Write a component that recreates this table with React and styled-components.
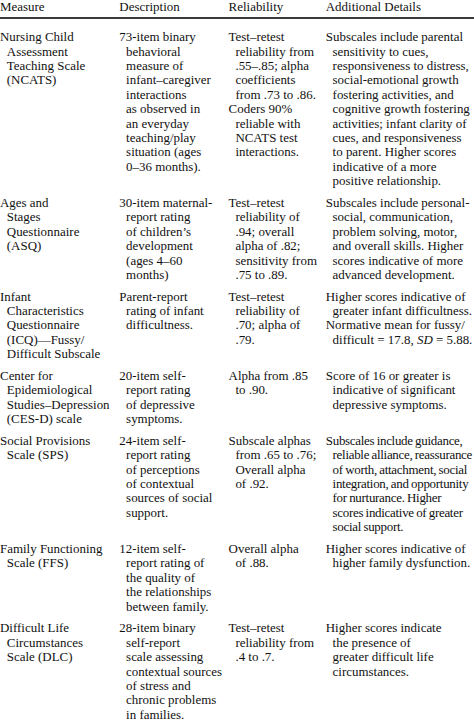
import React from "react";
import styled, { createGlobalStyle } from "styled-components";

const Global = createGlobalStyle`
  html, body { margin: 0; padding: 0; background: #fff; }
  body { overflow: hidden; }
`;

const COLS = "119.3px 109.3px 97.2px 1fr";

const Page = styled.div`
  width: 474px;
  height: 722px;
  overflow: hidden;
  background: #fff;
  color: #111;
  font-family: "Liberation Serif", "Times New Roman", serif;
  font-size: 12.95px;
  line-height: 14.4px;
`;

const HeaderRow = styled.div`
  display: grid;
  grid-template-columns: ${COLS};
  padding-bottom: 3px;
  border-bottom: 2px solid #3a3a3a;
  margin-top: -0.4px;
`;

const HeaderCell = styled.div`
  white-space: nowrap;
`;

const Body = styled.div`
  display: flex;
  flex-direction: column;
  gap: 7.3px;
  padding-top: 11.1px;
`;

const Row = styled.div`
  display: grid;
  grid-template-columns: ${COLS};
`;

const Cell = styled.div`
  display: flex;
  flex-direction: column;
  letter-spacing: ${(p) => (p.$tight ? "-0.28px" : "normal")};
  word-spacing: ${(p) => (p.$tight ? "-0.6px" : "normal")};
`;

const Para = styled.p`
  margin: 0;
  padding-left: 6.8px;
  text-indent: -6.8px;
  white-space: nowrap;
`;

const Em = styled.i`
  font-style: italic;
`;

const headers = ["Measure", "Description", "Reliability", "Additional Details"];

const rows = [
  [
    [["Nursing Child", "Assessment", "Teaching Scale", "(NCATS)"]],
    [["73-item binary", "behavioral", "measure of", "infant–caregiver", "interactions", "as observed in", "an everyday", "teaching/play", "situation (ages", "0–36 months)."]],
    [
      ["Test–retest", "reliability from", ".55–.85; alpha", "coefficients", "from .73 to .86."],
      ["Coders 90%", "reliable with", "NCATS test", "interactions."],
    ],
    [["Subscales include parental", "sensitivity to cues,", "responsiveness to distress,", "social-emotional growth", "fostering activities, and", "cognitive growth fostering", "activities; infant clarity of", "cues, and responsiveness", "to parent. Higher scores", "indicative of a more", "positive relationship."]],
  ],
  [
    [["Ages and", "Stages", "Questionnaire", "(ASQ)"]],
    [["30-item maternal-", "report rating", "of children’s", "development", "(ages 4–60", "months)"]],
    [["Test–retest", "reliability of", ".94; overall", "alpha of .82;", "sensitivity from", ".75 to .89."]],
    [["Subscales include personal-", "social, communication,", "problem solving, motor,", "and overall skills. Higher", "scores indicative of more", "advanced development."]],
  ],
  [
    [["Infant", "Characteristics", "Questionnaire", "(ICQ)—Fussy/", "Difficult Subscale"]],
    [["Parent-report", "rating of infant", "difficultness."]],
    [["Test–retest", "reliability of", ".70; alpha of", ".79."]],
    [
      ["Higher scores indicative of", "greater infant difficultness."],
      ["Normative mean for fussy/", "SDLINE"],
    ],
  ],
  [
    [["Center for", "Epidemiological", "Studies–Depression", "(CES-D) scale"]],
    [["20-item self-", "report rating", "of depressive", "symptoms."]],
    [["Alpha from .85", "to .90."]],
    [["Score of 16 or greater is", "indicative of significant", "depressive symptoms."]],
  ],
  [
    [["Social Provisions", "Scale (SPS)"]],
    [["24-item self-", "report rating", "of perceptions", "of contextual", "sources of social", "support."]],
    [["Subscale alphas", "from .65 to .76;", "Overall alpha", "of .92."]],
    [["Subscales include guidance,", "reliable alliance, reassurance", "of worth, attachment, social", "integration, and opportunity", "for nurturance. Higher", "scores indicative of greater", "social support."]],
  ],
  [
    [["Family Functioning", "Scale (FFS)"]],
    [["12-item self-", "report rating of", "the quality of", "the relationships", "between family."]],
    [["Overall alpha", "of .88."]],
    [["Higher scores indicative of", "higher family dysfunction."]],
  ],
  [
    [["Difficult Life", "Circumstances", "Scale (DLC)"]],
    [["28-item binary", "self-report", "scale assessing", "contextual sources", "of stress and", "chronic problems", "in families."]],
    [["Test–retest", "reliability from", ".4 to .7."]],
    [["Higher scores indicate", "the presence of", "greater difficult life", "circumstances."]],
  ],
];

function renderLine(line) {
  if (line === "SDLINE") {
    return (
      <>
        difficult = 17.8, <Em>SD</Em> = 5.88.
      </>
    );
  }
  return line;
}

export default function App() {
  return (
    <Page>
      <Global />
      <HeaderRow>
        {headers.map((h) => (
          <HeaderCell key={h}>{h}</HeaderCell>
        ))}
      </HeaderRow>
      <Body>
        {rows.map((row, ri) => (
          <Row key={ri}>
            {row.map((cell, ci) => (
              <Cell key={ci} $tight={ri === 4 && ci === 3}>
                {cell.map((para, pi) => (
                  <Para key={pi}>
                    {para.map((line, li) => (
                      <React.Fragment key={li}>
                        {li > 0 && <br />}
                        {renderLine(line)}
                      </React.Fragment>
                    ))}
                  </Para>
                ))}
              </Cell>
            ))}
          </Row>
        ))}
      </Body>
    </Page>
  );
}
